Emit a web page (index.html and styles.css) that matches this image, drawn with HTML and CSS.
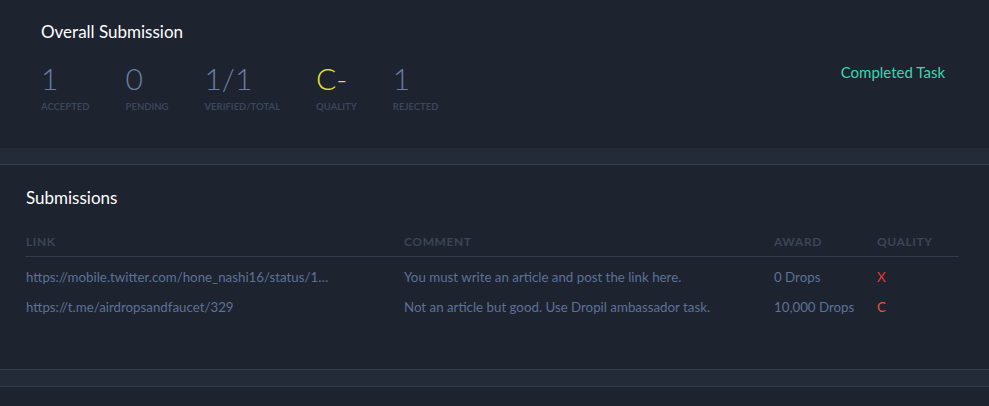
FILE: index.html
```html
<!DOCTYPE html>
<html lang="en">
<head>
    <meta charset="UTF-8">
    <title>Task Submissions</title>
    <link rel="stylesheet" href="styles.css">
</head>
<body>
    <!-- Overall submission summary -->
    <section class="card summary">
        <div class="summary-main">
            <h2 class="card-title">Overall Submission</h2>
            <div class="stats">
                <div class="stat">
                    <div class="stat-value">1</div>
                    <div class="stat-label">Accepted</div>
                </div>
                <div class="stat">
                    <div class="stat-value">0</div>
                    <div class="stat-label">Pending</div>
                </div>
                <div class="stat">
                    <div class="stat-value">1/1</div>
                    <div class="stat-label">Verified/Total</div>
                </div>
                <div class="stat">
                    <div class="stat-value grade">C-</div>
                    <div class="stat-label">Quality</div>
                </div>
                <div class="stat">
                    <div class="stat-value">1</div>
                    <div class="stat-label">Rejected</div>
                </div>
            </div>
        </div>
        <div class="status">Completed Task</div>
    </section>

    <!-- Submissions list -->
    <section class="card submissions">
        <h2 class="card-title">Submissions</h2>
        <table class="sub-table">
            <thead>
                <tr>
                    <th class="col-link">Link</th>
                    <th class="col-comment">Comment</th>
                    <th class="col-award">Award</th>
                    <th>Quality</th>
                </tr>
            </thead>
            <tbody>
                <tr>
                    <td class="link-cell">https://mobile.twitter.com/hone_nashi16/status/1…</td>
                    <td>You must write an article and post the link here.</td>
                    <td>0 Drops</td>
                    <td class="q-bad">X</td>
                </tr>
                <tr>
                    <td class="link-cell">https://t.me/airdropsandfaucet/329</td>
                    <td>Not an article but good. Use Dropil ambassador task.</td>
                    <td>10,000 Drops</td>
                    <td class="q-c">C</td>
                </tr>
            </tbody>
        </table>
    </section>

    <section class="card next"></section>
</body>
</html>
```

FILE: styles.css
```css
body {
    margin: 0;
    background-color: #232a38;
    font-family: Lato, "Open Sans", sans-serif;
    color: #5d7196;
}

.card {
    background-color: #1e2330;
}

.card-title {
    margin: 0;
    font-size: 17px;
    font-weight: 400;
    color: #ffffff;
}

/* Summary card */
.summary {
    height: 148px;
    box-sizing: border-box;
    padding: 21px 44px 0 41px;
    display: flex;
    justify-content: space-between;
    align-items: flex-start;
}

.stats {
    display: flex;
    margin-top: 19px;
}

.stat {
    margin-right: 36px;
}

.stat-value {
    font-size: 30px;
    font-weight: 300;
    line-height: 34px;
    color: #6a7ea0;
}

.stat-value.grade {
    color: #e6e03a;
}

.stat-label {
    margin-top: 6px;
    font-size: 9.5px;
    font-weight: 700;
    text-transform: uppercase;
    color: #3a4659;
}

.status {
    margin-top: 42px;
    font-size: 15px;
    color: #3fd6ae;
}

/* Submissions card */
.submissions {
    margin-top: 16px;
    border-top: 1px solid #343c4a;
    border-bottom: 1px solid #343c4a;
    height: 206px;
    box-sizing: border-box;
    padding: 22px 29px 0 26px;
}

.sub-table {
    width: 100%;
    margin-top: 26px;
    margin-left: -1px;
    border-collapse: collapse;
    font-size: 13.3px;
}

.sub-table th {
    text-align: left;
    font-size: 12px;
    font-weight: 700;
    letter-spacing: 0.6px;
    text-transform: uppercase;
    color: #3b4556;
    padding: 0 0 7px 1px;
    border-bottom: 1px solid #343c4a;
}

.sub-table td {
    padding: 0 0 0 1px;
    height: 30px;
    vertical-align: middle;
}

.sub-table tbody tr:first-child td {
    padding-top: 5px;
}

.col-link {
    width: 377px;
}

.col-comment {
    width: 369px;
}

.col-award {
    width: 102px;
}

.q-bad {
    color: #e8393f;
}

.q-c {
    color: #f0553a;
}

.next {
    margin-top: 16px;
    border-top: 1px solid #343c4a;
    height: 19px;
}
```
